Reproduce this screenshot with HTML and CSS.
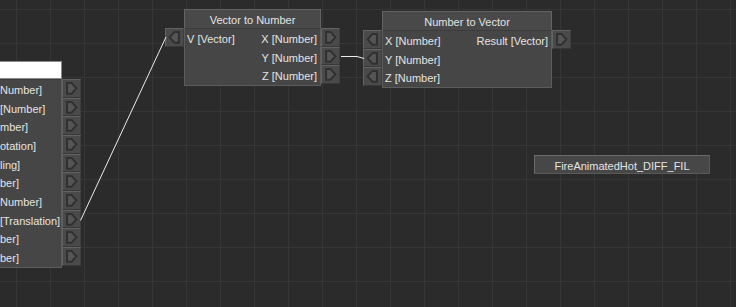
FILE: index.html
```html
<!DOCTYPE html>
<html lang="en">
<head>
    <meta charset="UTF-8">
    <title>Flow Graph</title>
    <link rel="stylesheet" href="styles.css">
</head>
<body>
    <div class="canvas">
        <!-- clipped entity node on the left edge -->
        <div class="node node-entity">
            <div class="rename"></div>
            <div class="node-main">
                <div class="node-body">
                    <div class="row"><span>Number]</span></div>
                    <div class="row"><span>[Number]</span></div>
                    <div class="row"><span>mber]</span></div>
                    <div class="row"><span>otation]</span></div>
                    <div class="row"><span>ling]</span></div>
                    <div class="row"><span>ber]</span></div>
                    <div class="row"><span>Number]</span></div>
                    <div class="row"><span>[Translation]</span></div>
                    <div class="row"><span>ber]</span></div>
                    <div class="row"><span>ber]</span></div>
                </div>
                <div class="ports">
                    <div class="port out"><svg viewBox="0 0 17 17"><path d="M4 3H8.5L13.5 8.5L8.5 14H4Z"/></svg></div>
                    <div class="port out"><svg viewBox="0 0 17 17"><path d="M4 3H8.5L13.5 8.5L8.5 14H4Z"/></svg></div>
                    <div class="port out"><svg viewBox="0 0 17 17"><path d="M4 3H8.5L13.5 8.5L8.5 14H4Z"/></svg></div>
                    <div class="port out"><svg viewBox="0 0 17 17"><path d="M4 3H8.5L13.5 8.5L8.5 14H4Z"/></svg></div>
                    <div class="port out"><svg viewBox="0 0 17 17"><path d="M4 3H8.5L13.5 8.5L8.5 14H4Z"/></svg></div>
                    <div class="port out"><svg viewBox="0 0 17 17"><path d="M4 3H8.5L13.5 8.5L8.5 14H4Z"/></svg></div>
                    <div class="port out"><svg viewBox="0 0 17 17"><path d="M4 3H8.5L13.5 8.5L8.5 14H4Z"/></svg></div>
                    <div class="port out"><svg viewBox="0 0 17 17"><path d="M4 3H8.5L13.5 8.5L8.5 14H4Z"/></svg></div>
                    <div class="port out"><svg viewBox="0 0 17 17"><path d="M4 3H8.5L13.5 8.5L8.5 14H4Z"/></svg></div>
                    <div class="port out"><svg viewBox="0 0 17 17"><path d="M4 3H8.5L13.5 8.5L8.5 14H4Z"/></svg></div>
                </div>
            </div>
        </div>

        <div class="node node-v2n">
            <div class="node-title">Vector to Number</div>
            <div class="node-main">
                <div class="ports">
                    <div class="port in"><svg viewBox="0 0 17 17"><path d="M4 3H8.5L13.5 8.5L8.5 14H4Z"/></svg></div>
                    <div class="port empty"></div>
                    <div class="port empty"></div>
                </div>
                <div class="node-body">
                    <div class="row"><span>V [Vector]</span><span>X [Number]</span></div>
                    <div class="row"><span></span><span>Y [Number]</span></div>
                    <div class="row"><span></span><span>Z [Number]</span></div>
                </div>
                <div class="ports">
                    <div class="port out"><svg viewBox="0 0 17 17"><path d="M4 3H8.5L13.5 8.5L8.5 14H4Z"/></svg></div>
                    <div class="port out"><svg viewBox="0 0 17 17"><path d="M4 3H8.5L13.5 8.5L8.5 14H4Z"/></svg></div>
                    <div class="port out"><svg viewBox="0 0 17 17"><path d="M4 3H8.5L13.5 8.5L8.5 14H4Z"/></svg></div>
                </div>
            </div>
        </div>

        <div class="node node-n2v">
            <div class="node-title">Number to Vector</div>
            <div class="node-main">
                <div class="ports">
                    <div class="port in"><svg viewBox="0 0 17 17"><path d="M4 3H8.5L13.5 8.5L8.5 14H4Z"/></svg></div>
                    <div class="port in"><svg viewBox="0 0 17 17"><path d="M4 3H8.5L13.5 8.5L8.5 14H4Z"/></svg></div>
                    <div class="port in"><svg viewBox="0 0 17 17"><path d="M4 3H8.5L13.5 8.5L8.5 14H4Z"/></svg></div>
                </div>
                <div class="node-body">
                    <div class="row"><span>X [Number]</span><span>Result [Vector]</span></div>
                    <div class="row"><span>Y [Number]</span><span></span></div>
                    <div class="row"><span>Z [Number]</span><span></span></div>
                </div>
                <div class="ports">
                    <div class="port out"><svg viewBox="0 0 17 17"><path d="M4 3H8.5L13.5 8.5L8.5 14H4Z"/></svg></div>
                    <div class="port empty"></div>
                    <div class="port empty"></div>
                </div>
            </div>
        </div>

        <div class="tag">FireAnimatedHot_DIFF_FIL</div>

        <svg class="links" width="736" height="307">
            <line x1="80.5" y1="220.5" x2="166" y2="37"/>
            <polyline points="341,56.5 357,56.5 364,58.5"/>
        </svg>
    </div>
</body>
</html>
```

FILE: styles.css
```css
* {
    box-sizing: border-box;
}
body {
    margin: 0;
    background-color: #2b2b2b;
    font-family: 'Liberation Sans', Arial, sans-serif;
    font-size: 11px;
    color: #e4e4e4;
}
.canvas {
    position: relative;
    width: 736px;
    height: 307px;
    overflow: hidden;
    background-color: #2b2b2b;
    background-image:
        linear-gradient(to right, #363636 1px, transparent 1px),
        linear-gradient(to bottom, #363636 1px, transparent 1px);
    background-size: 34px 34px;
    background-position: 16px 9px;
}
.links {
    position: absolute;
    left: 0;
    top: 0;
    pointer-events: none;
}
.links line, .links polyline {
    stroke: #ececec;
    stroke-width: 1;
    fill: none;
}

/* nodes */
.node {
    position: absolute;
    display: flex;
    flex-direction: column;
}
.node-title {
    height: 19px;
    margin: 0 19px;
    padding-top: 3px;
    line-height: 15px;
    text-align: center;
    white-space: nowrap;
    background-color: #494949;
    border: 1px solid #646464;
    border-bottom: none;
}
.node-main {
    display: flex;
}
.node-body {
    flex: 1;
    min-width: 0;
    overflow: hidden;
    background-color: #464646;
    border: 1px solid #5c5c5c;
    border-top-color: #3c3c3c;
}
.row {
    display: flex;
    justify-content: space-between;
    height: 18.67px;
    padding: 2px 3px 0 2px;
    line-height: 16px;
    white-space: nowrap;
}
.ports {
    display: flex;
    flex-direction: column;
    flex-shrink: 0;
    width: 19px;
}
.port {
    width: 19px;
    height: 18.67px;
    background-color: #4a4a4a;
    border: 1px solid #626262;
    border-right-color: #3e3e3e;
    border-bottom-color: #383838;
}
.port.empty {
    background: none;
    border: none;
}
.port svg {
    display: block;
    width: 17px;
    height: 16.67px;
}
.port path {
    fill: #555555;
    stroke: #303030;
    stroke-width: 2;
    stroke-linejoin: miter;
}
.port.in svg {
    transform: scaleX(-1);
}

.node-v2n {
    left: 165px;
    top: 9px;
    width: 175px;
}
.node-n2v {
    left: 363px;
    top: 11px;
    width: 208px;
}
.node-entity {
    left: -4px;
    top: 61px;
    width: 85px;
}
.node-entity .node-body {
    border-left: none;
}
.node-entity .row {
    padding-left: 4px;
}
.rename {
    width: 66px;
    height: 18px;
    background-color: #ffffff;
    border: 1px solid #8a8a8a;
    border-left: none;
}

.tag {
    position: absolute;
    left: 534px;
    top: 155px;
    width: 176px;
    height: 19px;
    padding-top: 3px;
    line-height: 15px;
    text-align: center;
    background-color: #474747;
    border: 1px solid #6a6a6a;
    border-right-color: #5a5a5a;
    border-bottom-color: #5a5a5a;
}
```
